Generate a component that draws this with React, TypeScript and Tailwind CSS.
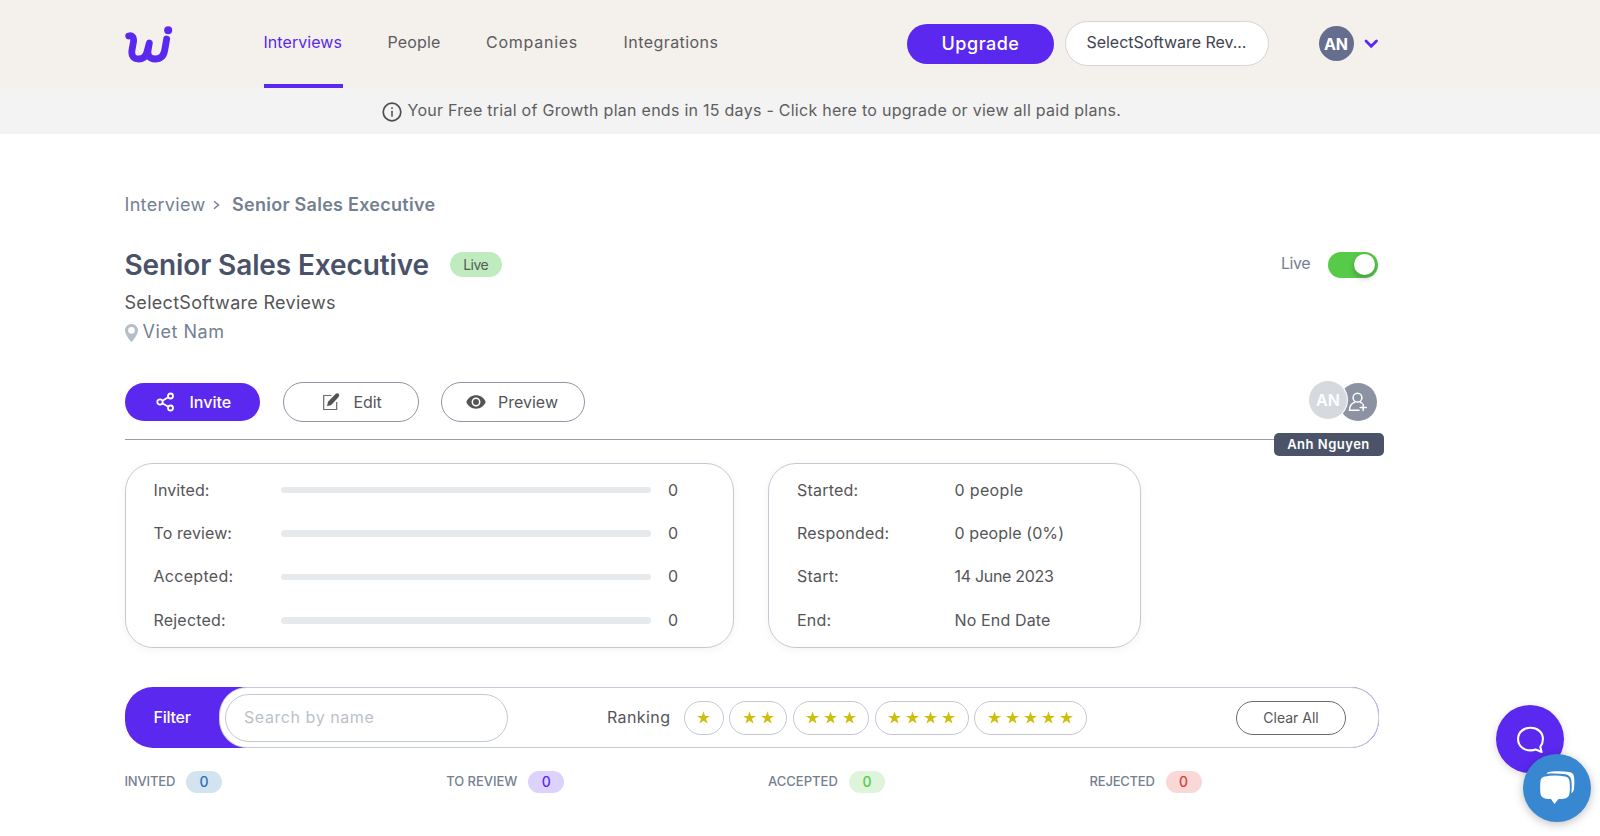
import { FC, ReactNode } from "react";

const Logo: FC = () => (
  <svg width="48" height="38" viewBox="75 75 144 114" fill="none">
    <path
      d="M86 108 C98 105 103 113 100 128 L96 150 C93 168 101 177 116 177 C131 177 139 168 142 152 L148 129 L144 152 C142 168 150 177 165 177 C181 177 191 168 194 151 L200 117"
      stroke="#5a28ef"
      strokeWidth="20.500"
      strokeLinecap="round"
      strokeLinejoin="round"
    />
    <circle cx="204.500" cy="91" r="12" fill="#5a28ef" />
  </svg>
);

const Star: FC = () => (
  <span className="flex w-[18.1px] justify-center">
    <svg width="13" height="13" viewBox="0 0 24 24" fill="#cdbf0c">
      <path d="M12 0.500l2.800 8.500H24l-7.400 5.400 2.800 8.900L12 17.900l-7.400 5.400 2.800-8.900L0 9h9.200z" />
    </svg>
  </span>
);

const ShareIcon: FC = () => (
  <svg width="19" height="20" viewBox="0 0 19 20" fill="none" stroke="white" strokeWidth="1.800">
    <circle cx="14.500" cy="4" r="2.500" />
    <circle cx="4" cy="10" r="2.700" />
    <circle cx="14.500" cy="16" r="2.500" />
    <path d="M6.400 8.700l5.900-3.400M6.400 11.300l5.900 3.400" />
  </svg>
);

const EditIcon: FC = () => (
  <svg width="18" height="18" viewBox="0 0 18 18" fill="none">
    <path d="M9.500 2.500H1.700v14h13V9" stroke="#6b6b6e" strokeWidth="1.200" />
    <path d="M5 13.200l1-4.400 7-7.400c1.200-1.300 2.700-1.400 3.600-.6.900.9.800 2.300-.4 3.600l-7 7.500z" fill="#545456" />
  </svg>
);

const EyeIcon: FC = () => (
  <svg width="20" height="14" viewBox="0 0 20 14">
    <path d="M10 .3C5.600.3 1.900 3 .3 7c1.600 4 5.300 6.700 9.700 6.700s8.100-2.700 9.700-6.700C18.100 3 14.400.3 10 .3z" fill="#545456" />
    <circle cx="10" cy="7" r="3.700" fill="#545456" stroke="white" strokeWidth="1.500" />
  </svg>
);

const PinIcon: FC = () => (
  <svg width="13" height="18" viewBox="0 0 13 18" className="mt-[2px]">
    <path
      d="M6.500 0C2.900 0 0 2.900 0 6.400 0 11 6.500 18 6.500 18S13 11 13 6.400C13 2.900 10.100 0 6.500 0zm0 9.700a3.300 3.300 0 110-6.600 3.300 3.300 0 010 6.600z"
      fill="#b5bdc7"
    />
  </svg>
);

const AddUserIcon: FC = () => (
  <svg width="20" height="20" viewBox="0 0 20 20" fill="none" stroke="white" strokeWidth="1.500" strokeLinecap="round">
    <circle cx="9.500" cy="5.700" r="4.400" />
    <path d="M11 18.200H1.500c0-4 2-6.600 5-7.800M12.500 10.300l1.600.9M15.200 12.500v6M12.200 15.500h6" />
  </svg>
);

const NavLink: FC<{ className: string; active?: boolean; children: ReactNode }> = ({
  className,
  active,
  children,
}) => (
  <a
    className={`relative flex h-full items-center pb-[5px] ${className} ${
      active ? "text-[#5a28ef]" : "text-[#5c5c60]"
    }`}
  >
    {children}
    {active && <span className="absolute bottom-0 left-0 h-[4.5px] w-full bg-[#5a28ef]" />}
  </a>
);

const Header: FC = () => (
  <header className="flex h-[88px] items-center bg-[#f4f0eb] pl-[125px]">
    <Logo />
    <nav className="ml-[90.5px] flex h-full w-[643.5px] items-center">
      <NavLink active className="w-[79px] tracking-[0.06px]">Interviews</NavLink>
      <NavLink className="ml-[45px] w-[54px] tracking-[0.15px]">People</NavLink>
      <NavLink className="ml-[44.5px] w-[92px] tracking-[0.74px]">Companies</NavLink>
      <NavLink className="ml-[45.5px] tracking-[0.44px]">Integrations</NavLink>
    </nav>
    <button className="h-10 w-[147px] rounded-full bg-[#5a28ef] text-lg font-medium tracking-[0.5px] text-white">
      Upgrade
    </button>
    <div className="mb-[2px] ml-[11px] flex h-[45px] w-[203.5px] items-center rounded-full border border-[#d3d5d9] bg-white pl-[20.5px] pb-[2px] text-[#3f4450] tracking-[-0.04px]">
      SelectSoftware Rev...
    </div>
    <div className="mb-[1px] ml-[50px] flex size-[35px] items-center justify-center rounded-full bg-[#656e8e] font-bold text-white">
      AN
    </div>
    <svg className="ml-[10px]" width="15" height="10" viewBox="0 0 15 10" fill="none">
      <path d="M2 2l5.200 5.200L12.500 2" stroke="#5a28ef" strokeWidth="2.800" strokeLinecap="round" />
    </svg>
  </header>
);

const Banner: FC = () => (
  <div className="flex h-[45.5px] items-center bg-[#f3f3f3] pl-[381.5px] text-[#5e5e60]">
    <svg width="20" height="20" viewBox="0 0 20 20" fill="none" className="mt-[2px] shrink-0">
      <circle cx="10" cy="10" r="8.800" stroke="#4e4e50" strokeWidth="1.700" />
      <path d="M10 8.700v6M10 5.300v1.700" stroke="#4e4e50" strokeWidth="1.500" />
    </svg>
    <p className="mb-[1px] ml-[6px] tracking-[0.267px]">
      Your Free trial of Growth plan ends in 15 days - Click here to upgrade or view all paid plans.
    </p>
  </div>
);

const progress = [
  { label: "Invited:", style: "tracking-[0.1px]" },
  { label: "To review:", style: "tracking-[0.1px]" },
  { label: "Accepted:", style: "tracking-[0.3px]" },
  { label: "Rejected:", style: "tracking-[0.2px]" },
];

const details = [
  { label: "Started:", value: "0 people", style: "tracking-[0.34px]" },
  { label: "Responded:", value: "0 people (0%)", style: "tracking-[0.1px]" },
  { label: "Start:", value: "14 June 2023", style: "tracking-[-0.3px]" },
  { label: "End:", value: "No End Date", style: "tracking-[0.14px]" },
];

const stages = [
  { name: "INVITED", style: "bg-[#d1e4f0] text-[#2f6fb4]", text: "tracking-[-0.18px]" },
  { name: "TO REVIEW", style: "bg-[#dcd2fc] text-[#5a28ef]", text: "tracking-[-0.04px]" },
  { name: "ACCEPTED", style: "bg-[#def5dc] text-[#54c94b]", text: "tracking-[0.04px]" },
  { name: "REJECTED", style: "bg-[#fad8d7] text-[#e23c34]", text: "tracking-[-0.22px]" },
];

const card = "h-[184.5px] rounded-[28px] border border-[#c3c9d3] pt-[4px] shadow-[0_2px_10px_rgba(0,0,0,0.05)]";

const Title: FC = () => (
  <>
    <div className="flex h-[27px] items-center text-lg text-[#748091]">
      <span className="tracking-[0.32px]">Interview</span>
      <svg className="ml-[7px]" width="7" height="10" viewBox="0 0 7 10" fill="none">
        <path d="M1 1.200l4.500 3.800L1 8.800" stroke="#748091" strokeWidth="1.500" />
      </svg>
      <span className="ml-[12.5px] font-semibold tracking-[0.27px]">Senior Sales Executive</span>
    </div>
    <div className="mt-[25.5px] flex h-[42px] items-center">
      <h1 className="w-[325px] whitespace-nowrap text-[28px] font-semibold tracking-[-0.12px] text-[#4a5269]">
        Senior Sales Executive
      </h1>
      <span className="flex h-[25.5px] w-[52.5px] items-center justify-center rounded-full bg-[#c0ebbe] text-sm tracking-[-0.5px] text-[#545b57]">
        Live
      </span>
      <div className="ml-auto mr-[1px] flex items-center">
        <span className="mb-[3px] tracking-[-0.5px] text-[#748091]">Live</span>
        <span className="ml-[18px] flex h-[26px] w-[50px] items-center justify-end rounded-full bg-[#57ca49] pr-[3px]">
          <span className="mb-[1px] size-[21px] rounded-full bg-white shadow-[0_3px_6px_rgba(0,0,0,0.25)]" />
        </span>
      </div>
    </div>
    <p className="mt-[3px] h-[27px] text-lg leading-[27px] tracking-[0.3px] text-[#555558]">
      SelectSoftware Reviews
    </p>
    <p className="mt-[3px] flex h-[27px] items-center text-lg tracking-[0.55px] text-[#748091]">
      <PinIcon />
      <span className="ml-[5px]">Viet Nam</span>
    </p>
  </>
);

const Actions: FC = () => (
  <div className="relative mt-[36.5px] flex h-[58px] items-start border-b border-[#99a0ad] text-[#555558]">
    <button className="mt-[1px] flex h-[38px] w-[135.5px] items-center rounded-full bg-[#5a28ef] pl-[31px] font-medium text-white">
      <ShareIcon />
      <span className="ml-[15px]">Invite</span>
    </button>
    <button className="ml-[22.5px] flex h-10 w-[136px] items-center rounded-full border border-[#8d95a5] pl-[38px]">
      <EditIcon />
      <span className="ml-[14px] tracking-[-0.1px]">Edit</span>
    </button>
    <button className="ml-[22px] flex h-10 w-[144px] items-center rounded-full border border-[#8d95a5] pl-[24.5px]">
      <EyeIcon />
      <span className="ml-[12px]">Preview</span>
    </button>
    <div className="ml-auto mr-[2px] flex">
      <span className="z-10 -mt-[1px] flex size-[38px] items-center justify-center rounded-full bg-[#d6dadf] font-semibold text-white ring-1 ring-white">
        AN
      </span>
      <span className="-ml-[8px] mt-[1px] flex size-[38px] items-center justify-center rounded-full bg-[#8d92a2]">
        <AddUserIcon />
      </span>
    </div>
    <span className="absolute -right-[4.5px] top-[51px] flex h-[23px] w-[110px] items-center justify-center rounded-[5px] bg-[#4b5369] text-[13px] font-semibold tracking-[0.5px] text-white">
      Anh Nguyen
    </span>
  </div>
);

const Stats: FC = () => (
  <div className="mt-[23px] flex gap-[34px]">
    <div className={`${card} w-[609.5px] pl-[28px]`}>
      {progress.map(({ label, style }) => (
        <div key={label} className="flex h-[43.4px] items-center">
          <span className={`w-[127.5px] ${style}`}>{label}</span>
          <span className="mt-[1px] h-[6.5px] w-[370px] rounded-full bg-[#e7eaed]" />
          <span className="ml-[17px]">0</span>
        </div>
      ))}
    </div>
    <div className={`${card} w-[373px] pl-[28px]`}>
      {details.map(({ label, value, style }) => (
        <div key={label} className="flex h-[43.4px] items-center">
          <span className="w-[157.5px] tracking-[0.2px]">{label}</span>
          <span className={style}>{value}</span>
        </div>
      ))}
    </div>
  </div>
);

const FilterBar: FC = () => (
  <div className="mt-[39.5px] flex h-[61px] w-[1254.5px] rounded-[28px] bg-[#5a28ef]">
    <span className="flex w-[94px] items-center pb-[1px] pl-[29px] font-medium tracking-[-0.25px] text-white">Filter</span>
    <div className="flex flex-1 items-center rounded-[28px] border border-[#c6cbda] bg-white pl-[5px]">
      <input
        className="h-12 w-[283.5px] rounded-full border border-[#c3c9d3] pb-[2px] pl-[18.5px] tracking-[0.57px] outline-none placeholder:text-[#bac1ca]"
        placeholder="Search by name"
      />
      <span className="mb-[2px] ml-[99px] w-[76.5px] tracking-[0.4px]">Ranking</span>
      <div className="flex gap-[5.5px]">
        {[1, 2, 3, 4, 5].map((count) => (
          <span key={count} className="flex h-[34px] items-center rounded-full border border-[#c3c9d3] px-[10px]">
            {Array.from({ length: count }, (_, i) => (
              <Star key={i} />
            ))}
          </span>
        ))}
      </div>
      <button className="ml-auto mr-[32px] h-[34px] w-[110px] rounded-full border border-[#6b6b6e] text-sm">
        Clear All
      </button>
    </div>
  </div>
);

const ChatButtons: FC = () => (
  <>
    <button className="fixed left-[1496px] top-[705px] flex size-[68px] items-center justify-center rounded-full bg-[#5a28ef] shadow-[0_2px_8px_rgba(0,0,0,0.15)]">
      <svg width="29" height="27" viewBox="0 0 28 26" fill="none" stroke="white" strokeWidth="2">
        <path
          d="M14 1.700c6.800 0 12 4.300 12 10.800 0 3.300-1.200 5.800-2.600 7.600l1.300 5-5.600-2.400c-1.600.6-3.300.8-5.100.8C7.200 23.500 2 19 2 12.500S7.200 1.700 14 1.700z"
          strokeLinejoin="round"
        />
      </svg>
    </button>
    <button className="fixed left-[1523px] top-[754px] flex size-[68px] items-center justify-center rounded-full bg-[#3787d1] shadow-[0_2px_10px_rgba(0,0,0,0.25)]">
      <svg width="36" height="34" viewBox="0 0 36 34" fill="white">
        <path d="M6 5.400C12.500 4.300 19.500 4.300 26 5.400c2.700.4 4.200 2 4.500 4.600.5 4 .5 8.500 0 12.500-.3 2.700-1.800 4.500-4.500 4.900-2.100.3-4.300.5-6.500.6L15.500 33 12 28c-2-.1-4-.3-6-.6-2.700-.4-4.200-2.200-4.500-4.900C1 18.500 1 14 1.500 10 1.800 7.400 3.300 5.800 6 5.400z" />
        <path d="M7.500 2.800C8.500 1.300 9.600.9 11 .8c6.500-.6 13-.6 19 .2 3 .4 4.700 1.800 5 4.700.5 4 .4 8.500 0 12.300-.2 1.900-1.100 3.300-2.700 4.100.5-4.300.6-8.600.1-12.600-.5-3.700-2.700-5.700-6-6.200-6.200-.9-12.700-1-18.900-.5z" />
      </svg>
    </button>
  </>
);

export default function App() {
  return (
    <div className="h-[836px] w-full overflow-hidden bg-white font-[Inter,sans-serif] text-base text-[#555558]">
      <Header />
      <Banner />
      <main className="ml-[124.5px] w-[1254.5px] pt-[57.5px]">
        <Title />
        <Actions />
        <Stats />
        <FilterBar />
        <div className="mt-[22.5px] flex text-[13px] font-medium">
          {stages.map(({ name, style, text }) => (
            <div key={name} className="flex w-[321.7px] shrink-0 items-center text-[#748091]">
              <span className={text}>{name}</span>
              <span className={`ml-[11px] flex h-[22.5px] w-9 items-center justify-center rounded-full text-sm ${style}`}>
                0
              </span>
            </div>
          ))}
        </div>
      </main>
      <ChatButtons />
    </div>
  );
}
